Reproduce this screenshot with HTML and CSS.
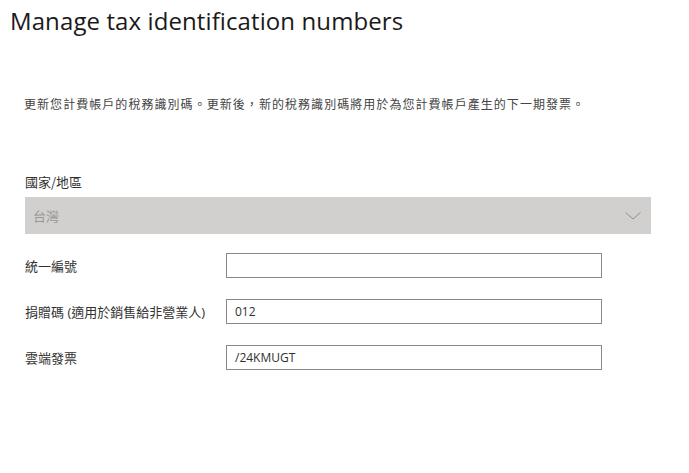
FILE: index.html
```html
<!DOCTYPE html>
<html lang="zh-Hant">
<head>
<meta charset="utf-8">
<link rel="stylesheet" href="styles.css">
</head>
<body>
<div class="page">
  <h1 class="title">Manage tax identification numbers</h1>
  <div class="content">
    <p class="desc">更新您計費帳戶的稅務識別碼。更新後，新的稅務識別碼將用於為您計費帳戶產生的下一期發票。</p>
    <div class="field-country">
      <div class="label">國家/地區</div>
      <div class="select">
        <span class="select-text">台灣</span>
        <svg class="chevron" width="16" height="8" viewBox="0 0 16 8"><path d="M0.5 0.5 L8 7 L15.5 0.5" fill="none" stroke="#8f8f8f" stroke-width="1"/></svg>
      </div>
    </div>
    <div class="row">
      <div class="row-label">統一編號</div>
      <div class="input"></div>
    </div>
    <div class="row">
      <div class="row-label">捐贈碼 (適用於銷售給非營業人)</div>
      <div class="input">012</div>
    </div>
    <div class="row">
      <div class="row-label">雲端發票</div>
      <div class="input">/24KMUGT</div>
    </div>
  </div>
</div>
</body>
</html>
```
FILE: styles.css
```css
html, body {
  margin: 0;
  padding: 0;
  background: #ffffff;
}
body {
  font-family: "Open Sans", "Noto Sans CJK TC", sans-serif;
  color: #323130;
}
.page {
  padding: 0 0 0 10px;
}
.title {
  margin: 0;
  padding-top: 4px;
  font-family: "Open Sans", sans-serif;
  font-weight: 400;
  font-size: 24px;
  line-height: 34px;
  color: #1b1a19;
  letter-spacing: 0.1px;
}
.content {
  padding-left: 14px;
  width: 627px;
}
.desc {
  margin: 57px 0 0 0;
  font-family: "Noto Sans CJK TC", sans-serif;
  font-size: 12px;
  letter-spacing: 1.05px;
  line-height: 18px;
  color: #444;
}
.field-country {
  margin-top: 60px;
}
.label {
  font-family: "Noto Sans CJK TC", sans-serif;
  font-size: 13px;
  line-height: 18px;
  color: #323130;
  padding-left: 1px;
}
.select {
  margin-top: 6px;
  height: 37px;
  background: #d1d0ce;
  display: flex;
  align-items: center;
  justify-content: space-between;
  padding: 0 10px 0 8px;
  margin-left: 1px;
}
.select-text {
  font-family: "Noto Sans CJK TC", sans-serif;
  font-size: 13px;
  color: #9a9896;
}
.chevron {
  display: block;
}
.row {
  display: flex;
  align-items: center;
  margin-top: 19px;
}
.row + .row {
  margin-top: 21px;
}
.row-label {
  width: 201px;
  padding-left: 1px;
  font-family: "Open Sans", "Noto Sans CJK TC", sans-serif;
  font-size: 13px;
  color: #323130;
}
.input {
  box-sizing: border-box;
  width: 376px;
  height: 25px;
  border: 1px solid #8a8886;
  padding: 0 8px;
  font-family: "Open Sans", sans-serif;
  font-size: 12px;
  line-height: 23px;
  color: #323130;
}
```
